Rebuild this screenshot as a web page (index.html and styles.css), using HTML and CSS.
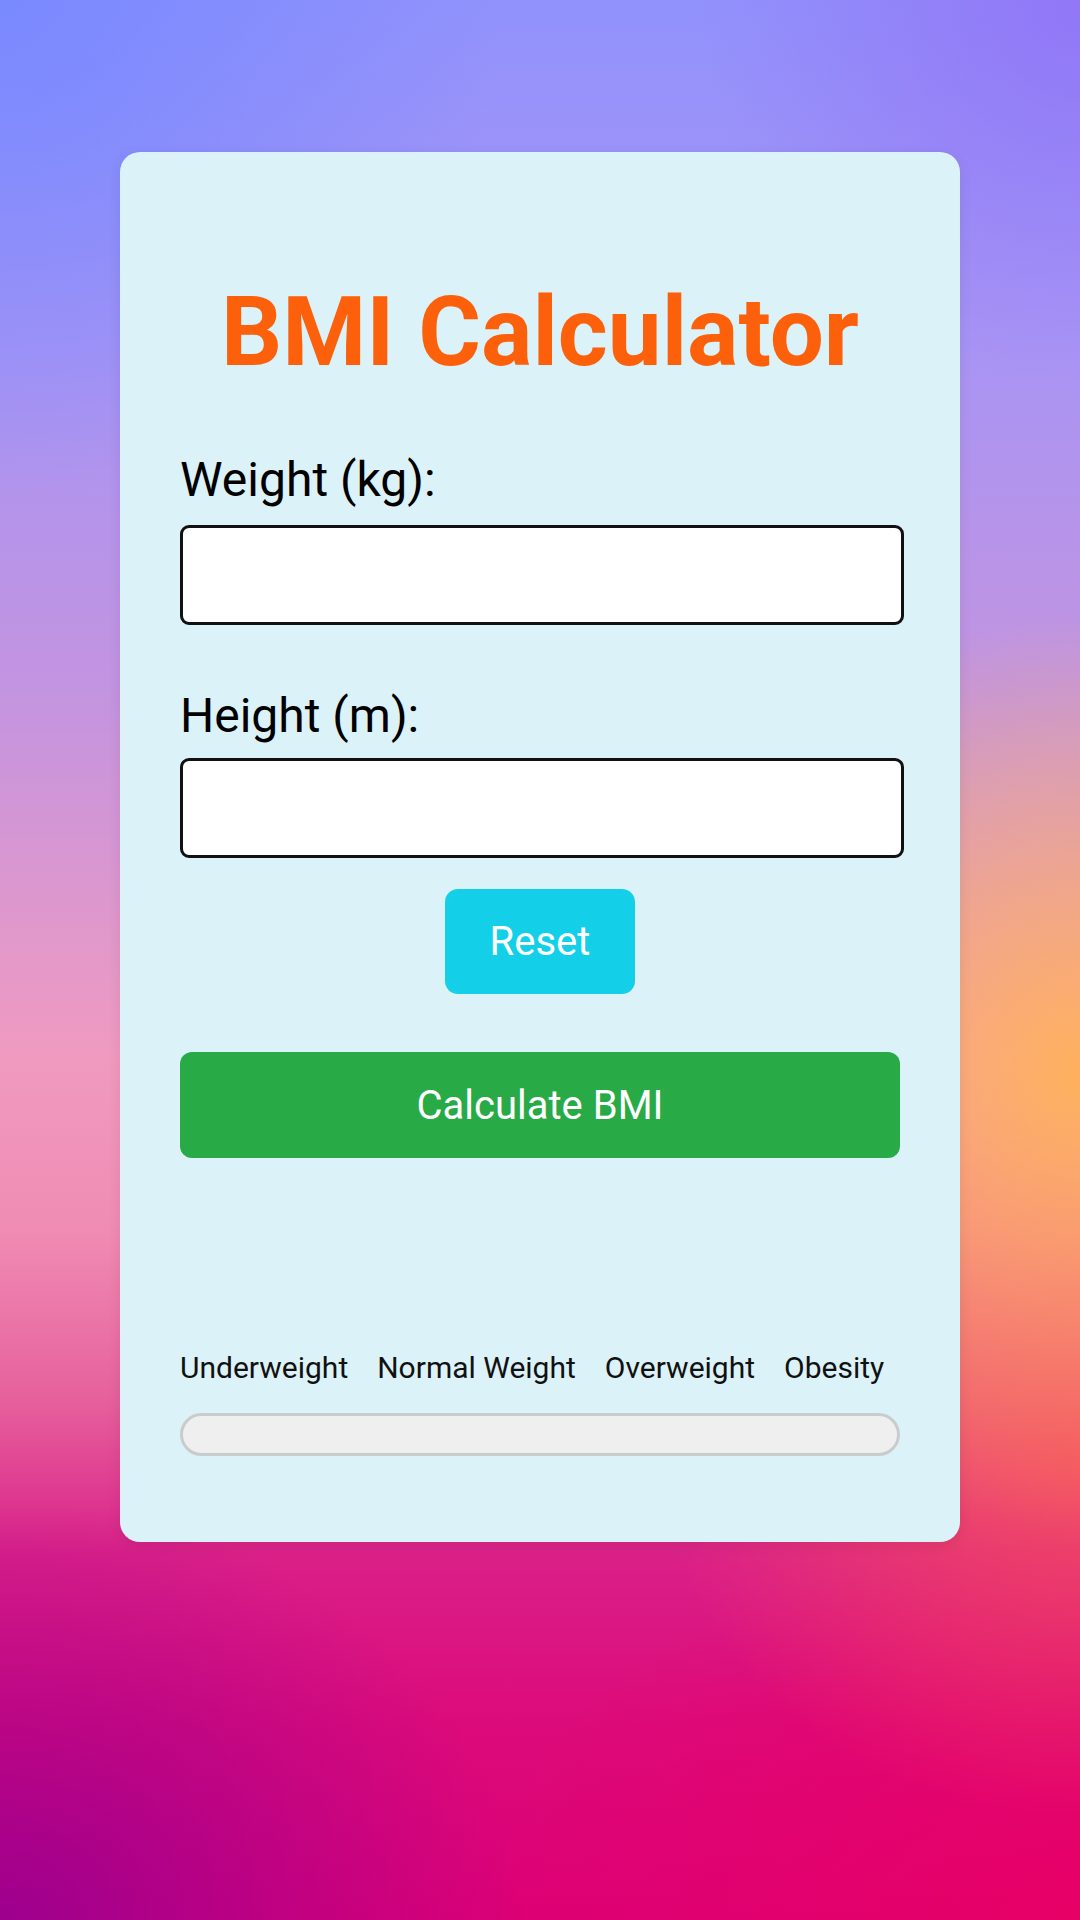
FILE: index.html
```html
<!DOCTYPE html>
<html>
    <head>
        <meta charset="utf-8">
        <title>BMI Calculator</title>
        <link rel="stylesheet" href="styles.css">
    </head>
    <body>
        <div class="container">
            <h1 class="title">BMI Calculator</h1>

            <label for="weight">Weight (kg):</label>
            <input type="number" id="weight">

            <label for="height">Height (m):</label>
            <input type="number" id="height">

            <div class="reset-row">
                <button id="resetBtn">Reset</button>
            </div>

            <button id="calcBtn">Calculate BMI</button>

            <div id="result"></div>

            <div class="scale-labels">
                <span>Underweight</span>
                <span>Normal Weight</span>
                <span>Overweight</span>
                <span>Obesity</span>
            </div>
            <div class="scale-bar">
                <div class="scale-fill"></div>
            </div>
        </div>
    </body>
</html>
```

FILE: styles.css
```css
* {
    box-sizing: border-box;
}

body {
    margin: 0;
    min-height: 1920px;
    padding-top: 152px;
    font-family: Roboto, 'Noto Sans', sans-serif;
    background:
        radial-gradient(ellipse 400px 460px at 100% 56%, rgba(255, 178, 88, 0.95), rgba(255, 178, 88, 0) 100%),
        radial-gradient(ellipse 420px 360px at 100% 76%, rgba(246, 80, 90, 0.85), rgba(246, 80, 90, 0) 100%),
        radial-gradient(ellipse 520px 420px at 0% 100%, rgba(150, 0, 145, 0.9), rgba(150, 0, 145, 0) 100%),
        radial-gradient(ellipse 600px 380px at 100% 100%, rgba(232, 0, 100, 0.9), rgba(232, 0, 100, 0) 100%),
        radial-gradient(ellipse 500px 500px at 0% 0%, rgba(118, 136, 255, 0.9), rgba(118, 136, 255, 0) 100%),
        radial-gradient(ellipse 380px 380px at 100% 0%, rgba(145, 112, 245, 0.8), rgba(145, 112, 245, 0) 100%),
        linear-gradient(180deg, #9192fc 0%, #a894f4 18%, #c394e0 36%, #f09ac0 55%, #f08cb4 64%, #e6609c 73%, #da2088 81%, #dc0a7a 90%, #dc0076 100%);
}

.container {
    width: 840px;
    margin: 0 auto;
    padding: 60px 60px 86px;
    background: #dbf2f8;
    border-radius: 20px;
    box-shadow: 0 4px 14px rgba(0, 0, 0, 0.08);
}

.title {
    margin: 64px 0 0;
    font-size: 96px;
    line-height: 112px;
    font-weight: 700;
    text-align: center;
    color: #fd600a;
}

label {
    display: block;
    margin: 64px 0 17px;
    font-size: 48px;
    line-height: 56px;
    color: #000;
}

label[for="height"] {
    margin: 63px 0 14px;
}

input {
    display: block;
    width: calc(100% + 4px);
    height: 100px;
    padding: 0 16px;
    border: 3px solid #111;
    border-radius: 9px;
    background: white;
    font-size: 40px;
    font-family: inherit;
}

.reset-row {
    display: flex;
    justify-content: center;
    margin-top: 31px;
}

button {
    border: none;
    color: white;
    font-family: inherit;
    font-size: 40px;
    line-height: 47px;
    cursor: pointer;
}

#resetBtn {
    padding: 29px 45px;
    background: #13d0e8;
    border-radius: 13px;
}

#calcBtn {
    display: block;
    width: 100%;
    height: 106px;
    margin-top: 58px;
    background: #28aa47;
    border-radius: 12px;
}

#result {
    min-height: 192px;
}

.scale-labels {
    display: flex;
    gap: 29px;
    font-size: 30px;
    line-height: 36px;
    color: #111;
}

.scale-bar {
    height: 43px;
    margin-top: 27px;
    background: #efefef;
    border: 3px solid #c9cccd;
    border-radius: 22px;
    overflow: hidden;
}

.scale-fill {
    width: 0;
    height: 100%;
}
```
